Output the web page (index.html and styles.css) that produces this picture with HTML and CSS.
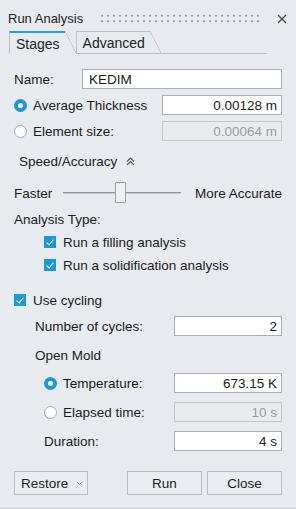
FILE: index.html
```html
<!DOCTYPE html>
<html lang="en">
<head>
<meta charset="UTF-8" />
<meta name="viewport" content="width=device-width, initial-scale=1" />
<title>Run Analysis</title>
<link rel="stylesheet" href="styles.css">
</head>
<body>

<div class="dialog">

  <!-- Title bar -->
  <div class="titlebar">
    <span class="title">Run Analysis</span>
    <span class="grip"></span>
    <svg class="close" width="10" height="10" viewBox="0 0 10 10">
      <path d="M1 1 L9 9 M9 1 L1 9" stroke="#444" stroke-width="1.2" fill="none" />
    </svg>
  </div>

  <!-- Tabs -->
  <div class="tabs">
    <div class="tab active">Stages</div>
    <div class="tab">Advanced</div>
    <div class="tab-rest"></div>
  </div>

  <div class="content">

    <div class="row row-name">
      <span class="label">Name:</span>
      <input class="field name-field" type="text" value="KEDIM" />
    </div>

    <div class="row">
      <span class="radio checked"></span>
      <span class="label">Average Thickness</span>
      <input class="field wide" type="text" value="0.00128 m" />
    </div>

    <div class="row">
      <span class="radio"></span>
      <span class="label">Element size:</span>
      <input class="field wide" type="text" value="0.00064 m" disabled />
    </div>

    <div class="row row-speed">
      <span class="label">Speed/Accuracy</span>
      <svg class="chevrons" width="9" height="9" viewBox="0 0 9 9">
        <path d="M1 4.5 L4.5 1 L8 4.5 M1 8 L4.5 4.5 L8 8" stroke="#555" stroke-width="1.1" fill="none" />
      </svg>
    </div>

    <div class="row row-slider">
      <span class="label">Faster</span>
      <div class="slider">
        <div class="track"></div>
        <div class="thumb"></div>
      </div>
      <span class="label">More Accurate</span>
    </div>

    <div class="row row-heading">
      <span class="label">Analysis Type:</span>
    </div>

    <div class="row row-check indent-1">
      <span class="check"></span>
      <span class="label">Run a filling analysis</span>
    </div>

    <div class="row row-check2 indent-1">
      <span class="check"></span>
      <span class="label">Run a solidification analysis</span>
    </div>

    <div class="row row-cycling">
      <span class="check"></span>
      <span class="label">Use cycling</span>
    </div>

    <div class="row indent-2">
      <span class="label">Number of cycles:</span>
      <input class="field narrow" type="text" value="2" />
    </div>

    <div class="row row-mold indent-2">
      <span class="label">Open Mold</span>
    </div>

    <div class="row row-temp indent-3">
      <span class="radio checked"></span>
      <span class="label">Temperature:</span>
      <input class="field narrow" type="text" value="673.15 K" />
    </div>

    <div class="row row-temp indent-3">
      <span class="radio"></span>
      <span class="label">Elapsed time:</span>
      <input class="field narrow" type="text" value="10 s" disabled />
    </div>

    <div class="row row-duration indent-4">
      <span class="label">Duration:</span>
      <input class="field narrow" type="text" value="4 s" />
    </div>

    <div class="buttons">
      <button class="btn restore">Restore
        <svg width="7" height="5" viewBox="0 0 7 5"><path d="M1 1 L3.5 3.5 L6 1" stroke="#888" stroke-width="1" fill="none" /></svg>
      </button>
      <span class="spacer"></span>
      <button class="btn">Run</button>
      <button class="btn">Close</button>
    </div>

  </div>
</div>

</body>
</html>
```

FILE: styles.css
```css
/* Reset */
* {
  margin: 0; padding: 0; box-sizing: border-box;
}
body {
  font-family: 'Liberation Sans', Arial, sans-serif;
  font-size: 13.5px;
  color: #1b1b1b;
  background: #e7ebef;
}
.dialog {
  width: 296px;
  height: 509px;
  background: #e7ebef;
  border-bottom: 1px solid #c9cdd1;
}

/* Title bar */
.titlebar {
  height: 31px;
  display: flex;
  align-items: center;
  padding: 6px 8px 0 8px;
}
.title {
  font-size: 13px;
  color: #222;
}
.grip {
  flex: 1;
  height: 11px;
  margin: 0 14px 0 16px;
  background-image: radial-gradient(circle, #9a9ea3 0.9px, transparent 1.3px);
  background-size: 6px 5.5px;
}
.close {
  margin-right: 1px;
}

/* Tabs */
.tabs {
  display: flex;
  height: 23px;
  padding-left: 9px;
}
.tab {
  position: relative;
  display: flex;
  align-items: center;
  padding: 0 5px 0 6px;
  margin-right: 11px;
  border-top: 1px solid #bcc1c6;
  border-left: 1px solid #bcc1c6;
  border-bottom: 1px solid #bcc1c6;
  font-size: 14px;
  color: #222;
}
.tab::after {
  content: '';
  position: absolute;
  top: -1px;
  right: -11px;
  width: 11px;
  height: calc(100% + 1px);
  background: linear-gradient(to top right, transparent calc(50% - 0.6px), #b4b9be 50%, transparent calc(50% + 0.6px));
}
.tab.active {
  border-top: 2px solid #2a9fd8;
  border-bottom-color: transparent;
  padding-top: 1px;
}
.tab.active::after {
  top: -2px;
  height: calc(100% + 2px);
}
.tab-rest {
  width: 117px;
  margin-left: -11px;
  border-bottom: 1px solid #bcc1c6;
}

/* Content */
.content {
  padding: 15px 14px 0 14px;
}
.row {
  display: flex;
  align-items: center;
  height: 20px;
  margin-bottom: 6px;
}
.label {
  white-space: nowrap;
}
.field {
  margin-left: auto;
  height: 20px;
  border: 1px solid #aab0b6;
  background: #fff;
  font-family: inherit;
  font-size: 13.5px;
  color: #1b1b1b;
  text-align: right;
  padding: 0 4px;
  outline: none;
}
.field:disabled {
  background: #e9ecef;
  border-color: #c2c6ca;
  color: #9b9b9b;
}
.name-field {
  width: 200px;
  text-align: left;
  padding-left: 6px;
}
.wide {
  width: 120px;
}
.narrow {
  width: 108px;
}

/* Radios and checks */
.radio {
  width: 13px;
  height: 13px;
  border-radius: 50%;
  border: 1px solid #a9aeb3;
  background: #fff;
  margin: 0 6px 0 0;
  flex-shrink: 0;
}
.radio.checked {
  border: 4px solid #1d98d6;
  background: #fff;
}
.check {
  width: 12px;
  height: 12px;
  background: #1d98d6;
  margin-right: 7px;
  flex-shrink: 0;
  position: relative;
}
.check::after {
  content: '';
  position: absolute;
  left: 4px;
  top: 1.5px;
  width: 3px;
  height: 6px;
  border-right: 1.6px solid #fff;
  border-bottom: 1.6px solid #fff;
  transform: rotate(40deg);
}

.row-speed {
  margin-top: 10px;
  padding-left: 5px;
}
.chevrons {
  margin-left: 9px;
}
.row-slider {
  height: 22px;
  margin-top: 11px;
  margin-bottom: 6px;
}
.slider {
  position: relative;
  flex: 1;
  height: 22px;
  margin: 0 14px 0 11px;
}
.track {
  position: absolute;
  left: 0;
  right: 0;
  top: 10px;
  height: 2px;
  background: #8d9297;
  border-bottom: 1px solid #c8ccd0;
}
.thumb {
  position: absolute;
  left: 52px;
  top: 0;
  width: 11px;
  height: 21px;
  background: #eef0f2;
  border: 1px solid #9ca1a6;
  border-radius: 1px;
}
.row-heading {
  height: 18px;
  margin-bottom: 4px;
}
.row-check {
  margin-bottom: 3px;
}
.row-check2 {
  margin-bottom: 15px;
}
.indent-1 {
  padding-left: 30px;
}
.row-cycling {
  margin-bottom: 6px;
}
.indent-2 {
  padding-left: 21px;
}
.row-mold {
  margin-top: 9px;
  margin-bottom: 8px;
}
.indent-3 {
  padding-left: 30px;
}
.row-temp {
  margin-bottom: 9px;
}
.row-duration {
  margin-top: 1px;
}
.indent-4 {
  padding-left: 30px;
}

/* Buttons */
.buttons {
  display: flex;
  margin-top: 20px;
  gap: 5px;
}
.btn {
  width: 75px;
  height: 24px;
  border: 1px solid #b9bec3;
  background: #e9edf1;
  font-family: inherit;
  font-size: 13.5px;
  color: #1b1b1b;
}
.restore {
  width: 74px;
  display: flex;
  align-items: center;
  padding-left: 6px;
  gap: 8px;
}
.spacer {
  flex: 1;
}
```
